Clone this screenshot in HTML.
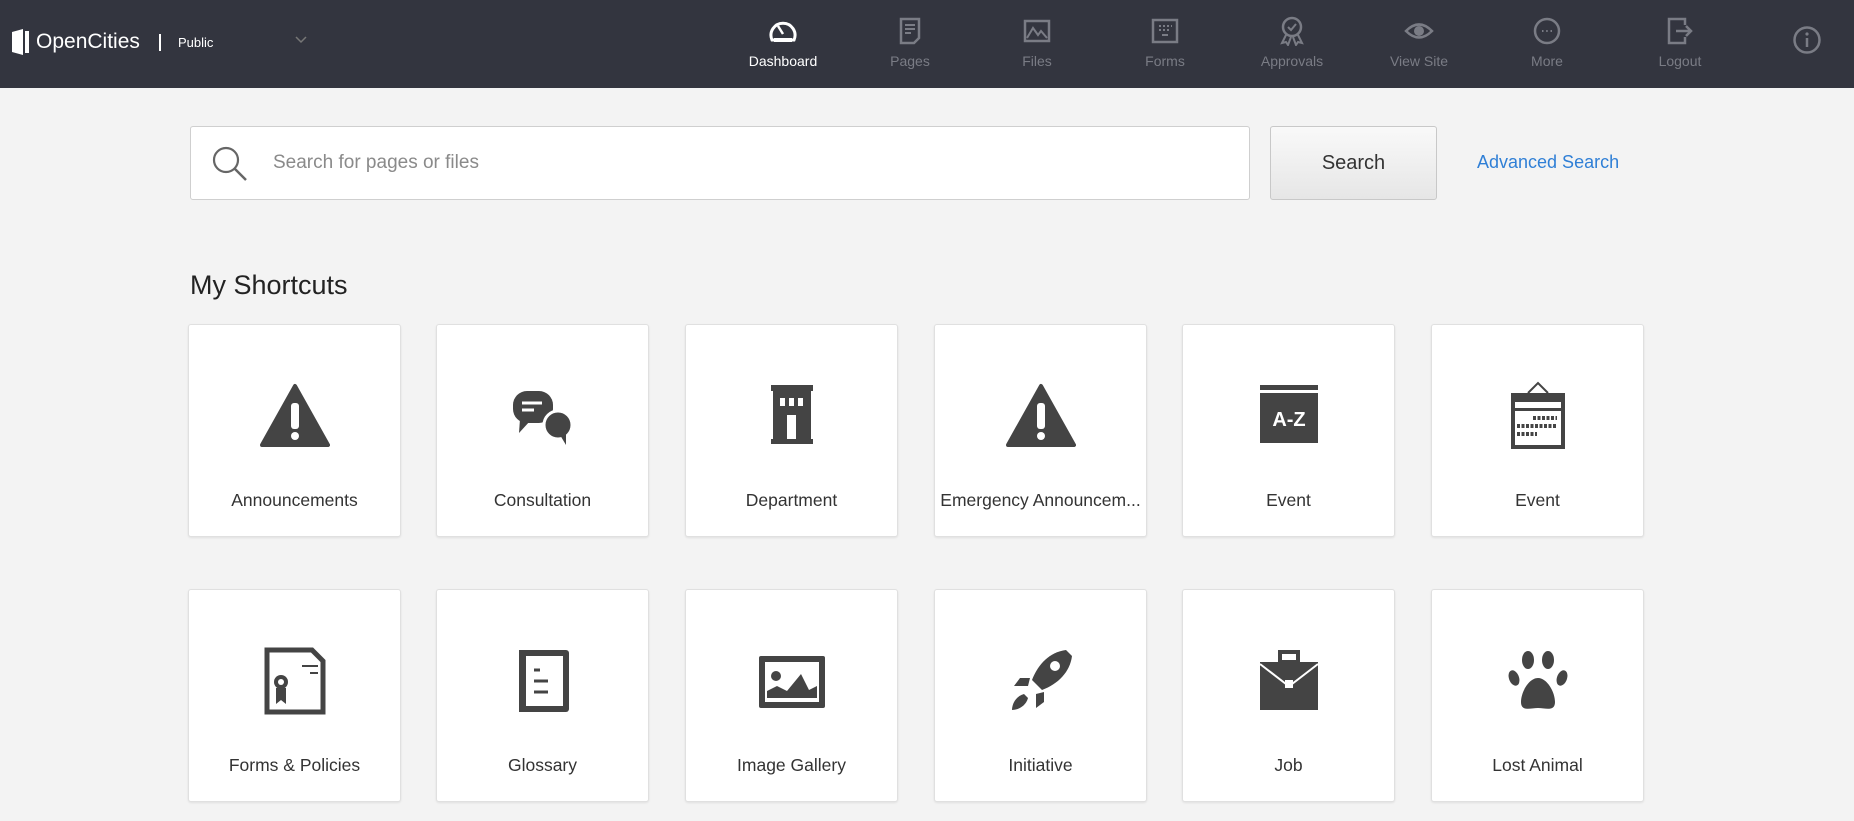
<!DOCTYPE html>
<html><head><meta charset="utf-8"><style>
*{box-sizing:border-box;margin:0;padding:0}
body{width:1854px;height:821px;overflow:hidden;background:#f3f3f3;font-family:"Liberation Sans",Arial,sans-serif;position:relative}
.hdr{position:absolute;left:0;top:0;width:1854px;height:88px;background:#33353f}
.logo{position:absolute;left:12px;top:29px;color:#fff;font-size:21px;display:flex;align-items:center;gap:6px}
.sep{position:absolute;left:159px;top:34px;width:2px;height:17px;background:#fff}
.pub{position:absolute;left:178px;top:35px;color:#fff;font-size:13px}
.chev{position:absolute;left:294px;top:35px}
.nav{position:absolute;top:0;width:110px;height:88px;text-align:center;color:#7a7c85;font-size:14px}
.nav svg{position:absolute;left:40px;top:16px}
.nav span{position:absolute;left:0;right:0;top:53px}
.nav.on{color:#fff}
.sbox{position:absolute;left:190px;top:126px;width:1060px;height:74px;background:#fff;border:1px solid #cfcfcf;border-radius:3px}
.sbox span{position:absolute;left:82px;top:25px;font-size:19px;color:#8a8a8a}
.btn{position:absolute;left:1270px;top:126px;width:167px;height:74px;border:1px solid #c8c8c8;border-radius:3px;background:linear-gradient(#f9f9f9,#e6e6e6);font-size:20px;color:#333;text-align:center;line-height:72px}
.adv{position:absolute;left:1477px;top:152px;font-size:18px;color:#2f7fd6}
h2{position:absolute;left:190px;top:270px;font-size:27px;font-weight:normal;color:#222}
.card{position:absolute;width:213px;height:213px;background:#fff;border:1px solid #e0e0e0;border-radius:3px;box-shadow:0 1px 2px rgba(0,0,0,.08)}
.card svg{position:absolute;left:71px;top:56px}
.card span{position:absolute;left:0;right:0;top:165px;text-align:center;font-size:17.5px;color:#333;white-space:nowrap;overflow:hidden;text-overflow:ellipsis;padding:0 3px}
</style></head><body>
<div class="hdr">
<div class="logo"><svg width="18" height="26" viewBox="0 0 18 26"><path d="M0 3 L11 0 V26 L0 23Z" fill="#fff"/><rect x="13" y="2" width="4" height="22" fill="#fff"/></svg><span>OpenCities</span></div>
<div class="sep"></div><div class="pub">Public</div>
<svg class="chev" width="14" height="10" viewBox="0 0 14 10"><path d="M2 2 L7 7 L12 2" stroke="#777" stroke-width="1.5" fill="none"/></svg>
<div class="nav on" style="left:728px"><svg width="30" height="30" viewBox="0 0 30 30"><path d="M4 24 A12 12 0 1 1 26 24 Z" fill="none" stroke="#fff" stroke-width="3"/><path d="M10 10 L15 18" stroke="#fff" stroke-width="2.5"/><rect x="6" y="22" width="18" height="4" fill="#fff"/></svg><span>Dashboard</span></div>
<div class="nav" style="left:855px"><svg width="30" height="30" viewBox="0 0 30 30"><path d="M6 3 H24 V22 L19 27 H6 Z" fill="none" stroke="#7a7c85" stroke-width="2.5"/><path d="M10 9H20M10 13H20M10 17H16" stroke="#7a7c85" stroke-width="2"/></svg><span>Pages</span></div>
<div class="nav" style="left:982px"><svg width="30" height="30" viewBox="0 0 30 30"><rect x="3" y="5" width="24" height="20" fill="none" stroke="#7a7c85" stroke-width="2.5"/><path d="M5 22 L11 12 L16 19 L19 15 L25 22" fill="none" stroke="#7a7c85" stroke-width="2"/></svg><span>Files</span></div>
<div class="nav" style="left:1110px"><svg width="30" height="30" viewBox="0 0 30 30"><rect x="3" y="4" width="24" height="22" fill="none" stroke="#7a7c85" stroke-width="2.5"/><path d="M9 10h2M13 10h2M17 10h2M21 10h1M9 14h2M13 14h2M17 14h2M12 19h6" stroke="#7a7c85" stroke-width="2"/></svg><span>Forms</span></div>
<div class="nav" style="left:1237px"><svg width="30" height="30" viewBox="0 0 30 30"><circle cx="15" cy="11" r="9" fill="none" stroke="#7a7c85" stroke-width="2.5"/><path d="M11 11l3 3 5-6M9 19 L5 27 L9 26 L11 29 L14 21M21 19 L25 27 L21 26 L19 29 L16 21" fill="none" stroke="#7a7c85" stroke-width="2"/></svg><span>Approvals</span></div>
<div class="nav" style="left:1364px"><svg width="30" height="30" viewBox="0 0 30 30"><path d="M2 15 Q15 2 28 15 Q15 28 2 15Z" fill="none" stroke="#7a7c85" stroke-width="2.5"/><circle cx="15" cy="15" r="5" fill="#7a7c85"/></svg><span>View Site</span></div>
<div class="nav" style="left:1492px"><svg width="30" height="30" viewBox="0 0 30 30"><circle cx="15" cy="15" r="12" fill="none" stroke="#7a7c85" stroke-width="2.5"/><path d="M10 15h1.5M14.2 15h1.5M18.5 15h1.5" stroke="#7a7c85" stroke-width="2"/></svg><span>More</span></div>
<div class="nav" style="left:1625px"><svg width="30" height="30" viewBox="0 0 30 30"><path d="M20 9 V3 H4 V27 H20 V21" fill="none" stroke="#7a7c85" stroke-width="2.5"/><path d="M11 15 H26 M21 10 L26 15 L21 20" fill="none" stroke="#7a7c85" stroke-width="2.5"/></svg><span>Logout</span></div>
<svg style="position:absolute;left:1792px;top:25px" width="30" height="30" viewBox="0 0 30 30"><circle cx="15" cy="15" r="12.5" fill="none" stroke="#7a7c85" stroke-width="2.5"/><path d="M15 13v9" stroke="#7a7c85" stroke-width="2.5"/><circle cx="15" cy="9" r="1.6" fill="#7a7c85"/></svg>
</div>

<div class="sbox"><svg style="position:absolute;left:20px;top:18px" width="38" height="38" viewBox="0 0 38 38"><circle cx="15" cy="15" r="12" fill="none" stroke="#666" stroke-width="2.2"/><path d="M24 24 L35 35" stroke="#666" stroke-width="2.5"/></svg><span>Search for pages or files</span></div>
<div class="btn">Search</div>
<div class="adv">Advanced Search</div>
<h2>My Shortcuts</h2>

<div class="card" style="left:188px;top:324px"><svg width="70" height="70" viewBox="0 0 70 70"><path d="M35 5 L68 64 H2 Z" fill="#444" stroke="#444" stroke-width="4" stroke-linejoin="round"/><rect x="31" y="22" width="8" height="26" rx="3" fill="#fff"/><circle cx="35" cy="55" r="4" fill="#fff"/></svg><span>Announcements</span></div>
<div class="card" style="left:436px;top:324px"><svg width="70" height="70" viewBox="0 0 70 70"><rect x="5" y="10" width="40" height="32" rx="14" fill="#444"/><path d="M12 38 L11 52 L22 40Z" fill="#444"/><path d="M14 22h20M14 29h12" stroke="#fff" stroke-width="3"/><circle cx="50" cy="44" r="14" fill="#444" stroke="#fff" stroke-width="3"/><path d="M52 54 L58 64 L58 52Z" fill="#444"/></svg><span>Consultation</span></div>
<div class="card" style="left:685px;top:324px"><svg width="70" height="70" viewBox="0 0 70 70"><rect x="14" y="4" width="42" height="6" fill="#444"/><rect x="16" y="10" width="38" height="50" fill="#444"/><rect x="14" y="58" width="42" height="5" fill="#444"/><rect x="23" y="17" width="5" height="8" fill="#fff"/><rect x="32" y="17" width="5" height="8" fill="#fff"/><rect x="41" y="17" width="5" height="8" fill="#fff"/><rect x="30" y="34" width="9" height="24" fill="#fff"/></svg><span>Department</span></div>
<div class="card" style="left:934px;top:324px"><svg width="70" height="70" viewBox="0 0 70 70"><path d="M35 5 L68 64 H2 Z" fill="#444" stroke="#444" stroke-width="4" stroke-linejoin="round"/><rect x="31" y="22" width="8" height="26" rx="3" fill="#fff"/><circle cx="35" cy="55" r="4" fill="#fff"/></svg><span>Emergency Announcem...</span></div>
<div class="card" style="left:1182px;top:324px"><svg width="70" height="70" viewBox="0 0 70 70"><rect x="6" y="4" width="58" height="5" fill="#444"/><rect x="6" y="12" width="58" height="50" fill="#444"/><text x="35" y="45" text-anchor="middle" font-family="Liberation Sans" font-weight="bold" font-size="20" fill="#fff">A-Z</text></svg><span>Event</span></div>
<div class="card" style="left:1431px;top:324px"><svg width="70" height="70" viewBox="0 0 70 70"><path d="M25 12 L35 2 L45 12" fill="none" stroke="#444" stroke-width="2"/><rect x="8" y="12" width="54" height="56" fill="#444"/><rect x="12" y="21" width="46" height="43" fill="#fff"/><rect x="12" y="27" width="46" height="3" fill="#444"/><path d="M30 37h24M14 45h40M14 53h20" stroke="#444" stroke-width="4" stroke-dasharray="3 1.5"/></svg><span>Event</span></div>

<div class="card" style="left:188px;top:589px"><svg width="70" height="70" viewBox="0 0 70 70"><path d="M7 4 H52 L63 15 V66 H7 Z" fill="none" stroke="#444" stroke-width="5"/><path d="M42 20h16M50 27h8" stroke="#444" stroke-width="2"/><circle cx="21" cy="36" r="7" fill="#444"/><circle cx="21" cy="36" r="3" fill="#fff"/><path d="M16 42 V58 L21 54 L26 58 V42Z" fill="#444"/></svg><span>Forms &amp; Policies</span></div>
<div class="card" style="left:436px;top:589px"><svg width="70" height="70" viewBox="0 0 70 70"><rect x="11" y="4" width="50" height="62" rx="3" fill="#444"/><rect x="18" y="10" width="37" height="50" fill="#fff"/><rect x="11" y="4" width="6" height="62" fill="#444"/><path d="M26 24h6M26 35h14M26 46h14" stroke="#444" stroke-width="3"/></svg><span>Glossary</span></div>
<div class="card" style="left:685px;top:589px"><svg width="70" height="70" viewBox="0 0 70 70"><rect x="2" y="10" width="66" height="52" rx="2" fill="#444"/><rect x="8" y="16" width="54" height="40" fill="#fff"/><circle cx="19" cy="30" r="5" fill="#444"/><path d="M10 52 L10 45 L20 40 L30 45 L44 28 L52 44 L60 40 V52Z" fill="#444"/></svg><span>Image Gallery</span></div>
<div class="card" style="left:934px;top:589px"><svg width="70" height="70" viewBox="0 0 70 70"><path d="M60 4 C44 6 32 18 26 34 L36 44 C52 38 64 26 66 10Z" fill="#444"/><circle cx="49" cy="20" r="5" fill="#fff"/><path d="M24 32 L14 32 L8 40 L22 40Z M38 46 L38 56 L30 62 L30 48Z" fill="#444"/><path d="M18 48 C10 50 6 58 6 64 C12 64 20 60 22 52Z" fill="#444"/></svg><span>Initiative</span></div>
<div class="card" style="left:1182px;top:589px"><svg width="70" height="70" viewBox="0 0 70 70"><rect x="26" y="6" width="18" height="10" fill="none" stroke="#444" stroke-width="4"/><rect x="6" y="16" width="58" height="48" fill="#444"/><path d="M6 18 L32 38 H38 L64 18" fill="none" stroke="#fff" stroke-width="2"/><rect x="31" y="34" width="8" height="8" fill="#fff"/></svg><span>Job</span></div>
<div class="card" style="left:1431px;top:589px"><svg width="70" height="70" viewBox="0 0 70 70"><ellipse cx="25" cy="14" rx="6" ry="9" fill="#444"/><ellipse cx="45" cy="14" rx="6" ry="9" fill="#444"/><ellipse cx="11" cy="32" rx="5" ry="8" fill="#444" transform="rotate(-20 11 32)"/><ellipse cx="59" cy="32" rx="5" ry="8" fill="#444" transform="rotate(20 59 32)"/><path d="M35 32 C26 32 18 46 18 56 C18 66 28 62 35 62 C42 62 52 66 52 56 C52 46 44 32 35 32Z" fill="#444"/></svg><span>Lost Animal</span></div>
</body></html>
